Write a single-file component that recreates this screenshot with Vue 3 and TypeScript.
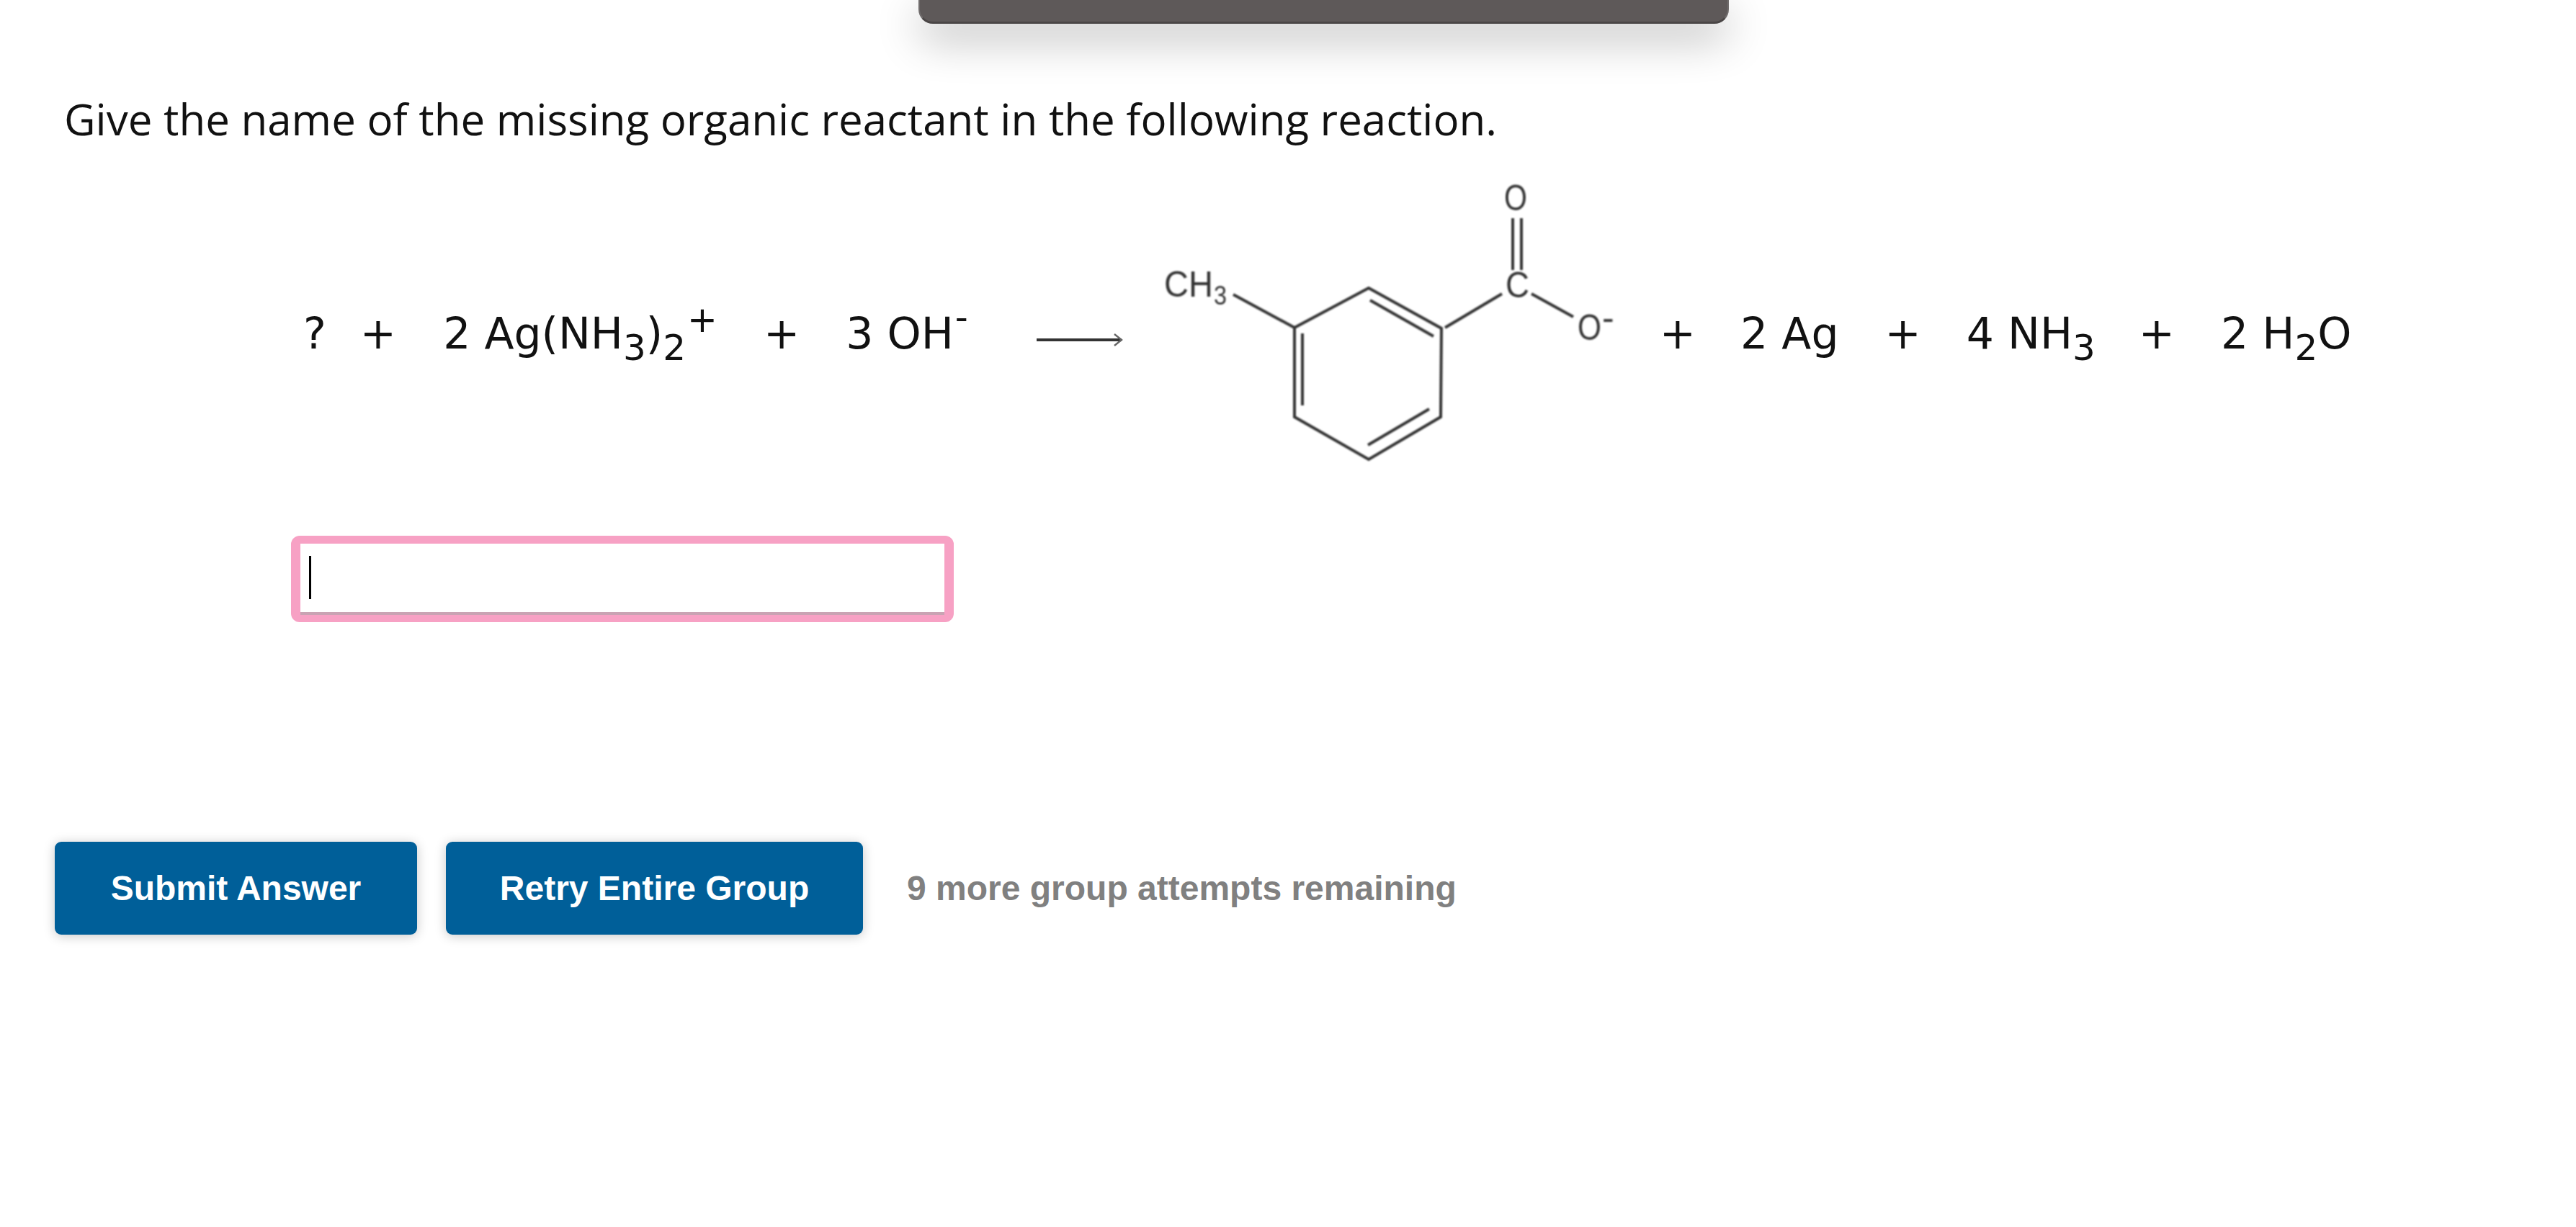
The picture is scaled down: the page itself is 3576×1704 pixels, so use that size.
<script setup lang="ts">
const question: string = 'Give the name of the missing organic reactant in the following reaction.'
const attempts: number = 9
</script>

<template>
  <div class="page">
    <div class="toolbar"></div>
    <h1 class="question">{{ question }}</h1>
    <div class="reaction">
      <div class="terms before">
        <span class="term">?</span>
        <span class="term plus p1">+</span>
        <span class="term t2">2 Ag(NH<span class="sub">3</span>)<span class="sub">2</span><span class="sup">+</span></span>
        <span class="term plus p2">+</span>
        <span class="term t3">3 OH<span class="sup minus">-</span></span>
      </div>
      <svg class="arrow" width="122" height="20" viewBox="0 0 122 20" aria-hidden="true">
        <path d="M0 10H118" stroke="#333" stroke-width="4" fill="none" />
        <path d="M108 2 L118 10 L108 18" stroke="#666" stroke-width="2.4" fill="none" />
      </svg>
      <svg class="molecule" width="660" height="420" viewBox="1600 240 660 420" aria-hidden="true">
        <g class="bonds">
          <path d="M1797 455L1900 400L2001 456L2000 579L1900 638L1797 579Z" />
          <path d="M1902 417L1990 467" />
          <path d="M1808 463V563" />
          <path d="M1984 568L1899 618" />
          <path d="M1712 409L1797 455" />
          <path d="M2006 455L2085 408" />
          <path d="M2100 303V375M2112 303V375" />
          <path d="M2126 408L2184 440" />
        </g>
        <g class="labels">
          <text x="1616" y="412" textLength="68" lengthAdjust="spacingAndGlyphs">CH</text>
          <text x="1685" y="423" class="small" textLength="18" lengthAdjust="spacingAndGlyphs">3</text>
          <text x="2088" y="292" textLength="32" lengthAdjust="spacingAndGlyphs">O</text>
          <text x="2090" y="413" textLength="33" lengthAdjust="spacingAndGlyphs">C</text>
          <text x="2190" y="472" textLength="33" lengthAdjust="spacingAndGlyphs">O</text>
          <text x="2224" y="458">-</text>
        </g>
      </svg>
      <div class="terms after">
        <span class="term plus">+</span>
        <span class="term t4">2 Ag</span>
        <span class="term plus p4">+</span>
        <span class="term t5">4 NH<span class="sub">3</span></span>
        <span class="term plus p5">+</span>
        <span class="term t6">2 H<span class="sub">2</span>O</span>
      </div>
    </div>
    <div class="answer">
      <span class="caret"></span>
    </div>
    <div class="actions">
      <button class="btn first" type="button">Submit Answer</button>
      <button class="btn second" type="button">Retry Entire Group</button>
      <span class="attempts">{{ attempts }} more group attempts remaining</span>
    </div>
  </div>
</template>

<style>
html, body { margin: 0; background: #fff; }
</style>

<style scoped>
.page {
  width: 3576px;
  height: 1704px;
  overflow: hidden;
  background: #fff;
  display: flex;
  flex-direction: column;
  align-items: flex-start;
}
.toolbar {
  width: 1125px;
  height: 33px;
  margin-left: 1275px;
  flex: none;
  background: #5e5959;
  border: 2px solid #6f6b6b;
  border-top: 0;
  border-bottom: 3px solid #4a4646;
  border-radius: 0 0 20px 20px;
  box-sizing: border-box;
  box-shadow: 0 20px 60px rgba(0, 0, 0, 0.3);
}
.question {
  margin: 90px 0 0 89px;
  font: 400 60px/84px "Open Sans", sans-serif;
  color: #111;
  white-space: nowrap;
  filter: blur(0.5px);
}
.reaction {
  display: flex;
  align-items: flex-start;
  margin-top: 33px;
  padding-left: 421px;
  font: 60px/80px "DejaVu Sans", sans-serif;
  color: #111;
  height: 420px;
}
.terms {
  display: flex;
  align-items: baseline;
  margin-top: 183px;
  white-space: pre;
  filter: blur(0.5px);
}
.p1 { margin-left: 47px; }
.t2 { margin-left: 65px; }
.p2 { margin-left: 64px; }
.t3 { margin-left: 64px; }
.t4 { margin-left: 62px; }
.p4 { margin-left: 64px; }
.t5 { margin-left: 63px; }
.p5 { margin-left: 60px; }
.t6 { margin-left: 64px; }
.sub {
  font-size: 50px;
  line-height: 0;
  vertical-align: -16px;
}
.sup {
  margin-left: 2px;
  font-size: 50px;
  line-height: 0;
  vertical-align: 23px;
}
.minus { vertical-align: 26px; }
.arrow {
  flex: none;
  margin: 222px 0 0 95px;
}
.molecule {
  flex: none;
  margin-left: 39px;
  filter: blur(0.9px);
}
.bonds path {
  fill: none;
  stroke: #333;
  stroke-width: 4;
}
.labels text {
  font: 50px "Liberation Sans", sans-serif;
  fill: #333;
}
.labels .small { font-size: 36px; }
.after { margin-left: 44px; }
.answer {
  width: 920px;
  height: 120px;
  margin: 84px 0 0 404px;
  flex: none;
  box-sizing: border-box;
  background: #fff;
  border-style: solid;
  border-color: #f7a1c4;
  border-width: 11px 13px 10px;
  border-radius: 12px;
  box-shadow: inset 0 -4px 0 #c9a3b3;
  display: flex;
  align-items: flex-start;
  padding: 17px 0 0 12px;
}
.caret {
  width: 3px;
  height: 60px;
  background: #000;
}
.actions {
  display: flex;
  align-items: center;
  margin: 305px 0 0 76px;
}
.btn {
  height: 129px;
  border: 0;
  border-radius: 9px;
  background: #005f99;
  color: #fff;
  font: 700 48px "Liberation Sans", sans-serif;
  padding: 0;
  box-shadow: 0 2px 16px rgba(0, 0, 0, 0.22);
}
.first { width: 503px; }
.second { width: 579px; margin-left: 40px; }
.attempts {
  margin-left: 61px;
  font: 700 48px "Liberation Sans", sans-serif;
  color: #808080;
}
</style>
